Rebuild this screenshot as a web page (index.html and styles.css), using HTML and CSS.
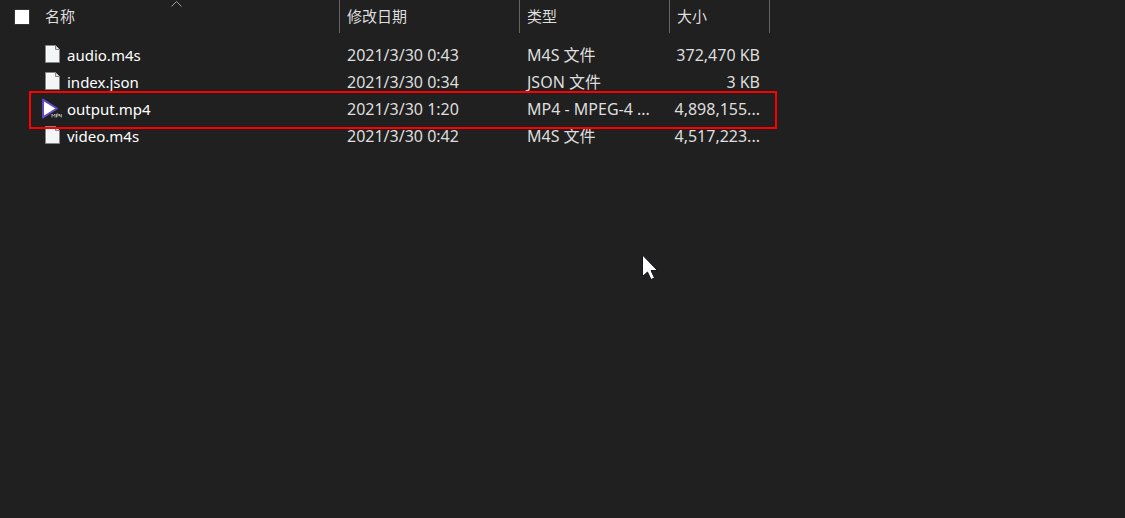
FILE: index.html
```html
<!DOCTYPE html>
<html lang="zh-CN">
<head>
    <meta charset="UTF-8">
    <meta name="viewport" content="width=device-width, initial-scale=1.0">
    <title>文件</title>
    <link rel="stylesheet" href="styles.css">
</head>
<body>
    <svg width="0" height="0" class="symbols" aria-hidden="true">
        <symbol id="icon-file" viewBox="0 0 15 18">
            <path d="M.5.5h10l4 4v13H.5z" fill="#f3f5f6" stroke="#858585"/>
            <path d="M1.500 16.500v-15h8" fill="none" stroke="#fff"/>
            <path d="M10.500.5v4h4" fill="#dfe1e3" stroke="#858585"/>
        </symbol>
    </svg>

    <main class="file-list">
        <table class="files">
            <colgroup>
                <col class="col-name">
                <col class="col-date">
                <col class="col-type">
                <col class="col-size">
            </colgroup>
            <thead>
                <tr>
                    <th>
                        <div class="head-name">
                            <input type="checkbox" id="select-all" class="select-all" aria-label="全选">
                            <button type="button">名称</button>
                        </div>
                        <svg class="sort-arrow" width="11" height="6" viewBox="0 0 11 6" aria-hidden="true"><path d="M.5 5.5l5-5 5 5" fill="none" stroke="#a0a0a0"/></svg>
                    </th>
                    <th><button type="button">修改日期</button></th>
                    <th><button type="button">类型</button></th>
                    <th><button type="button">大小</button></th>
                </tr>
            </thead>
            <tbody>
                <tr>
                    <td><div class="name"><svg class="icon" viewBox="0 0 15 18"><use href="#icon-file"/></svg>audio.m4s</div></td>
                    <td>2021/3/30 0:43</td>
                    <td>M4S 文件</td>
                    <td class="size">372,470 KB</td>
                </tr>
                <tr>
                    <td><div class="name"><svg class="icon" viewBox="0 0 15 18"><use href="#icon-file"/></svg>index.json</div></td>
                    <td>2021/3/30 0:34</td>
                    <td>JSON 文件</td>
                    <td class="size">3 KB</td>
                </tr>
                <tr class="marked">
                    <td>
                        <div class="name">
                            <svg class="icon-video" viewBox="0 0 21 21">
                                <path d="M2 1.600v17.800L16 10.500z" fill="#fff" stroke="#6149c4" stroke-width="2" stroke-linejoin="round"/>
                                <path d="M11 19.500V16l1.500 2 1.500-2v3.500M15.500 19.500V16h1.700v2h-1.700M18.500 16v2h2M20.300 16v3.500" fill="none" stroke="#a9a9a9"/>
                            </svg>output.mp4
                        </div>
                    </td>
                    <td>2021/3/30 1:20</td>
                    <td>MP4 - MPEG-4 ...</td>
                    <td class="size">4,898,155...</td>
                </tr>
                <tr>
                    <td><div class="name"><svg class="icon" viewBox="0 0 15 18"><use href="#icon-file"/></svg>video.m4s</div></td>
                    <td>2021/3/30 0:42</td>
                    <td>M4S 文件</td>
                    <td class="size">4,517,223...</td>
                </tr>
            </tbody>
        </table>

        <svg class="cursor" width="17" height="27" viewBox="0 0 17 27" aria-hidden="true">
            <path d="M.5 1v21.500l5-4.500 3.500 7.500 3.500-1.500-3.500-7.500h6.500z" fill="#fff" stroke="#15151f"/>
        </svg>
    </main>
</body>
</html>
```
FILE: styles.css
```css
body {
    margin: 0;
    background: #202020;
    color: #dedede;
    font-family: "Noto Sans", "Noto Sans CJK SC", sans-serif;
    font-size: 15px;
    line-height: 27px;
}

.symbols {
    position: absolute;
}

.file-list {
    position: relative;
    min-height: 100vh;
}

.files {
    width: 770px;
    table-layout: fixed;
    border-collapse: separate;
    border-spacing: 0;
}

.col-name {
    width: 340px;
}

.col-date {
    width: 180px;
}

.col-type {
    width: 150px;
}

.col-size {
    width: 100px;
}

th {
    position: relative;
    height: 33px;
    padding: 0 7px;
    border-right: 1px solid #636363;
    box-sizing: border-box;
    text-align: left;
}

th button {
    display: block;
    padding: 0;
    border: none;
    background: none;
    color: inherit;
    font: inherit;
    font-weight: normal;
    cursor: pointer;
}

.head-name {
    display: flex;
    align-items: center;
    gap: 15px;
    padding-left: 7px;
}

.select-all {
    appearance: none;
    width: 16px;
    height: 16px;
    margin: 0;
    border: 1px solid #333;
    background: #fff;
}

.select-all:checked {
    background: #4a90d9;
}

.sort-arrow {
    position: absolute;
    top: 1px;
    left: 171px;
}

/* gap between the header and the first row */
tbody::before {
    content: "";
    display: block;
    height: 9px;
}

td {
    height: 27px;
    padding: 0 7px;
    overflow: hidden;
    font-size: 16px;
    white-space: nowrap;
}

.name {
    display: flex;
    align-items: center;
    padding-left: 34px;
    color: #fff;
    font-size: 15px;
}

.icon {
    width: 15px;
    height: 18px;
    margin: 0 7px 3px 4px;
}

.icon-video {
    width: 21px;
    height: 21px;
    margin: 0 5px 2px 0;
}

.files .size {
    padding: 0 10px 0 0;
    text-align: right;
}

.marked {
    position: relative;
}

/* red frame round the row */
.marked::after {
    content: "";
    position: absolute;
    top: -5px;
    right: -7px;
    bottom: -6px;
    left: 29px;
    border: 2px solid #f00;
    pointer-events: none;
}

.cursor {
    position: absolute;
    top: 254px;
    left: 642px;
}
```
